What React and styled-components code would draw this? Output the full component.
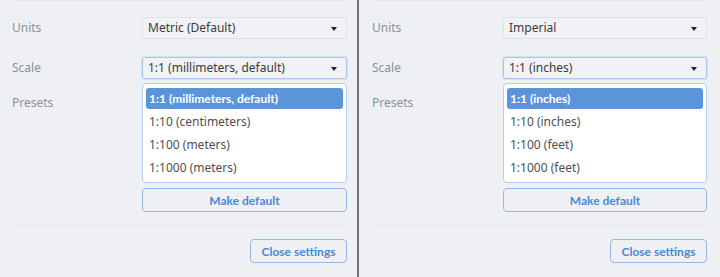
import React from "react";
import styled, { createGlobalStyle } from "styled-components";

const Global = createGlobalStyle`
  html, body { margin: 0; padding: 0; background: #eff0f3; }
  body { font-family: "Noto Sans", "Open Sans", sans-serif; font-size: 12px; }
`;

const Page = styled.div`
  display: flex;
  width: 720px;
  height: 277px;
  background: #eff0f3;
  overflow: hidden;
`;

const Panel = styled.div`
  width: ${(p) => p.$w}px;
  flex: none;
  box-sizing: border-box;
  padding: 0 ${(p) => p.$pr}px 0 ${(p) => p.$pl}px;
  display: flex;
  flex-direction: column;
`;

const Divider = styled.div`
  width: 2px;
  flex: none;
  background: #6c717b;
`;

const Rule = styled.div`
  height: 1px;
  background: #e2e4e8;
  margin-top: ${(p) => p.$mt || 0}px;
`;

const Row = styled.div`
  display: grid;
  grid-template-columns: ${(p) => p.$label}px 1fr;
  margin-top: ${(p) => p.$mt}px;
  position: relative;
`;

const Label = styled.div`
  color: #8b9099;
  font-size: 12px;
  line-height: 22px;
  height: 22px;
`;

const SelectWrap = styled.div`
  position: relative;
`;

const Select = styled.div`
  height: 22px;
  box-sizing: border-box;
  border: 1px solid ${(p) => (p.$focus ? "#a9c6ee" : "#e0e2e7")};
  box-shadow: ${(p) => (p.$focus ? "0 0 0 1px rgba(169,198,238,0.35)" : "none")};
  border-radius: 3px;
  background: #f1f2f5;
  display: flex;
  align-items: center;
  justify-content: space-between;
  padding: 0 9px 0 5px;
  color: #3b3b3b;
  font-size: 12px;
  line-height: 20px;
`;

const Caret = styled.span`
  width: 0;
  height: 0;
  border-left: 3.5px solid transparent;
  border-right: 3.5px solid transparent;
  border-top: 4px solid #222;
  margin-top: 2px;
`;

const Menu = styled.div`
  position: absolute;
  top: 26px;
  left: 0;
  right: 0;
  height: 100px;
  box-sizing: border-box;
  background: #fff;
  border: 1px solid #b6cdee;
  border-radius: 4px;
  padding: 4px 3px 5px;
  display: flex;
  flex-direction: column;
  gap: 2px;
  z-index: 2;
`;

const Item = styled.div`
  height: 21px;
  line-height: 21px;
  padding: 0 3px;
  border-radius: 3px;
  font-family: ${(p) => (p.$active ? `"Lato", "Noto Sans", sans-serif` : `"Noto Sans", sans-serif`)};
  font-size: 12px;
  background: ${(p) => (p.$active ? "#5b94d9" : "transparent")};
  color: ${(p) => (p.$active ? "#fff" : "#4f4f4f")};
  font-weight: ${(p) => (p.$active ? 700 : 400)};
`;

const PresetCol = styled.div`
  display: flex;
  flex-direction: column;
  gap: 4px;
`;

const PresetBox = styled.div`
  height: 92px;
`;

const OutlineButton = styled.button`
  height: 24px;
  width: ${(p) => (p.$w ? `${p.$w}px` : "100%")};
  box-sizing: border-box;
  border: 1px solid #93b7e8;
  border-radius: 4px;
  background: transparent;
  color: #4a89d6;
  font-family: "Lato", "Noto Sans", sans-serif;
  font-weight: 700;
  font-size: 12px;
  padding: 0;
  cursor: pointer;
`;

const Footer = styled.div`
  display: flex;
  justify-content: flex-end;
  margin-top: 13px;
`;

function SettingsPanel({ w, pl, pr, label, units, scale, options }) {
  return (
    <Panel $w={w} $pl={pl} $pr={pr}>
      <Rule />
      <Row $label={label} $mt={16}>
        <Label>Units</Label>
        <Select>
          <span>{units}</span>
          <Caret />
        </Select>
      </Row>
      <Row $label={label} $mt={18}>
        <Label>Scale</Label>
        <SelectWrap>
          <Select $focus>
            <span>{scale}</span>
            <Caret />
          </Select>
          <Menu>
            {options.map((o, i) => (
              <Item key={o} $active={i === 0}>
                {o}
              </Item>
            ))}
          </Menu>
        </SelectWrap>
      </Row>
      <Row $label={label} $mt={13}>
        <Label>Presets</Label>
        <PresetCol>
          <PresetBox />
          <OutlineButton>Make default</OutlineButton>
        </PresetCol>
      </Row>
      <Rule $mt={13} />
      <Footer>
        <OutlineButton $w={97}>Close settings</OutlineButton>
      </Footer>
    </Panel>
  );
}

export default function App() {
  return (
    <>
      <Global />
      <Page>
        <SettingsPanel
          w={357}
          pl={12}
          pr={10}
          label={130}
          units="Metric (Default)"
          scale="1:1 (millimeters, default)"
          options={[
            "1:1 (millimeters, default)",
            "1:10 (centimeters)",
            "1:100 (meters)",
            "1:1000 (meters)",
          ]}
        />
        <Divider />
        <SettingsPanel
          w={361}
          pl={13}
          pr={13}
          label={131}
          units="Imperial"
          scale="1:1 (inches)"
          options={["1:1 (inches)", "1:10 (inches)", "1:100 (feet)", "1:1000 (feet)"]}
        />
      </Page>
    </>
  );
}
